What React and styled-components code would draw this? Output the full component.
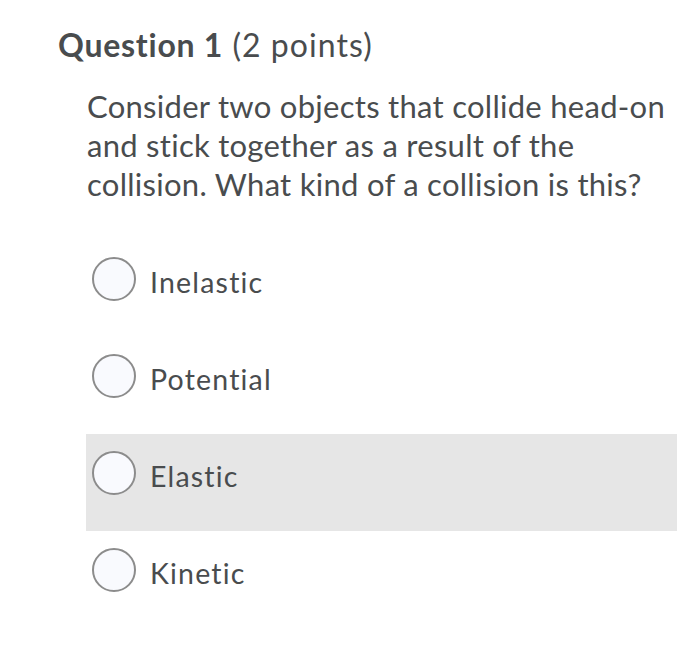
import React from "react";
import styled, { createGlobalStyle } from "styled-components";

const Global = createGlobalStyle`
  html, body { margin: 0; padding: 0; background: #ffffff; }
  body { font-family: Lato, "Open Sans", sans-serif; color: #494c4e; }
`;

const Page = styled.div`
  padding: 23px 0 0 58px;
  width: 619px;
`;

const Title = styled.h2`
  margin: 0;
  font-size: 32px;
  line-height: 44px;
  font-weight: 400;
  letter-spacing: 1.05px;
  color: #494c4e;
`;

const Strong = styled.span`
  font-weight: 700;
  letter-spacing: 0.75px;
`;

const Body = styled.div`
  padding: 0 0 0 29px;
`;

const Prompt = styled.p`
  margin: 20px 0 0 0;
  font-size: 31px;
  line-height: 39px;
  letter-spacing: 0.28px;
`;

const Options = styled.div`
  display: flex;
  flex-direction: column;
  margin-top: 36px;
  margin-left: -1px;
`;

const Option = styled.label`
  display: flex;
  align-items: flex-start;
  gap: 14px;
  height: 97px;
  box-sizing: border-box;
  padding: 17px 0 0 6px;
  background: ${(p) => (p.$hover ? "#e6e6e6" : "transparent")};
`;

const Radio = styled.span`
  flex: none;
  width: 44px;
  height: 44px;
  box-sizing: border-box;
  border-radius: 50%;
  border: 2px solid #8c8c8c;
  background: #f9fafe;
`;

const OptionText = styled.span`
  font-size: 28.5px;
  line-height: 44px;
  letter-spacing: 1.2px;
  margin-top: 3px;
`;

const choices = ["Inelastic", "Potential", "Elastic", "Kinetic"];

export default function App() {
  return (
    <>
      <Global />
      <Page>
        <Title>
          <Strong>Question 1</Strong> (2 points)
        </Title>
        <Body>
          <Prompt>
            Consider two objects that collide head-on and stick together as a
            result of the collision. What kind of a collision is this?
          </Prompt>
          <Options>
            {choices.map((c) => (
              <Option key={c} $hover={c === "Elastic"}>
                <Radio />
                <OptionText>{c}</OptionText>
              </Option>
            ))}
          </Options>
        </Body>
      </Page>
    </>
  );
}
